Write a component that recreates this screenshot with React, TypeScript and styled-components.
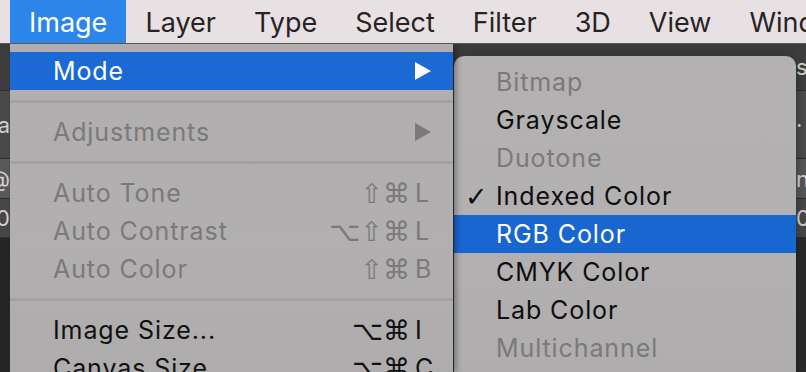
import React from "react";
import styled, { createGlobalStyle } from "styled-components";

const GlobalStyle = createGlobalStyle`
  html, body {
    margin: 0;
    padding: 0;
    background: #262626;
  }
  body {
    font-family: "Inter", "DejaVu Sans", sans-serif;
    -webkit-font-smoothing: antialiased;
  }
`;

const FONT = `"Inter", "DejaVu Sans", sans-serif`;
const SYMBOLS = `"DejaVu Sans", "Inter", sans-serif`;

const menuTitles = ["Image", "Layer", "Type", "Select", "Filter", "3D", "View", "Window"];

type Item =
  | { kind: "sep" }
  | {
      kind: "item";
      label: string;
      disabled?: boolean;
      active?: boolean;
      sub?: boolean;
      mods?: string;
      keyName?: string;
    };

const imageMenu: Item[] = [
  { kind: "item", label: "Mode", active: true, sub: true },
  { kind: "sep" },
  { kind: "item", label: "Adjustments", disabled: true, sub: true },
  { kind: "sep" },
  { kind: "item", label: "Auto Tone", disabled: true, mods: "⇧⌘", keyName: "L" },
  { kind: "item", label: "Auto Contrast", disabled: true, mods: "⌥⇧⌘", keyName: "L" },
  { kind: "item", label: "Auto Color", disabled: true, mods: "⇧⌘", keyName: "B" },
  { kind: "sep" },
  { kind: "item", label: "Image Size...", mods: "⌥⌘", keyName: "I" },
  { kind: "item", label: "Canvas Size...", mods: "⌥⌘", keyName: "C" },
];

const modeMenu = [
  { label: "Bitmap", disabled: true },
  { label: "Grayscale" },
  { label: "Duotone", disabled: true },
  { label: "Indexed Color", checked: true },
  { label: "RGB Color", active: true },
  { label: "CMYK Color" },
  { label: "Lab Color" },
  { label: "Multichannel", disabled: true },
];

// slivers of the Photoshop panels peeking out on both sides
const leftBands = [
  { h: 46, bg: "#3d3d3d", text: "" },
  { h: 67, bg: "#494949", text: "Clea" },
  { h: 39, bg: "#595959", text: "@" },
  { h: 38, bg: "#474747", text: "00" },
  { h: 200, bg: "#262626", text: "" },
];

const rightBands = [
  { h: 46, bg: "#3d3d3d", text: "s" },
  { h: 67, bg: "#4a4a4a", text: "·" },
  { h: 39, bg: "#555555", text: "ng" },
  { h: 38, bg: "#464646", text: "0c" },
  { h: 200, bg: "#2a2a2a", text: "" },
];

const Screen = styled.div`
  width: 806px;
  height: 372px;
  overflow: hidden;
  display: flex;
  flex-direction: column;
  background: #262626;
`;

const MenuBar = styled.div`
  height: 43px;
  flex: none;
  display: flex;
  align-items: stretch;
  padding-left: 10px;
  background: #e7e1e3;
  border-bottom: 1px solid #5a5858;
  overflow: hidden;
`;

const MenuTitle = styled.div<{ $active?: boolean }>`
  display: flex;
  align-items: center;
  padding: 1px 19px 0;
  font-family: ${FONT};
  font-size: 27px;
  white-space: nowrap;
  color: ${(p) => (p.$active ? "#ffffff" : "#272324")};
  background: ${(p) => (p.$active ? "#2c86ea" : "transparent")};
`;

const Workspace = styled.div`
  flex: 1;
  display: flex;
  min-height: 0;
  overflow: hidden;
`;

const Strip = styled.div<{ $align: "start" | "end" }>`
  display: flex;
  flex-direction: column;
  flex: none;
  width: ${(p) => (p.$align === "end" ? "10px" : "auto")};
  overflow: hidden;
`;

const Band = styled.div<{ $bg: string; $h: number; $align: "start" | "end" }>`
  height: ${(p) => p.$h}px;
  flex: none;
  display: flex;
  align-items: center;
  justify-content: ${(p) => (p.$align === "end" ? "flex-end" : "flex-start")};
  background: ${(p) => p.$bg};
  border-bottom: 1px solid #2e2e2e;
  font-family: ${FONT};
  font-size: 22px;
  color: #d2d2d2;
  white-space: nowrap;
  overflow: hidden;
`;

const Dropdown = styled.div`
  width: 443px;
  flex: none;
  position: relative;
  z-index: 2;
  display: flex;
  flex-direction: column;
  padding-top: 8px;
  background: linear-gradient(180deg, #b0aeae 0%, #b1afaf 60%, #aeacac 100%);
  box-shadow: 3px 0 6px rgba(0, 0, 0, 0.35);
`;

const Separator = styled.div`
  height: 23px;
  flex: none;
  display: flex;
  align-items: center;
  &::after {
    content: "";
    display: block;
    width: 100%;
    height: 3px;
    background: #a3a1a1;
  }
`;

const Row = styled.div<{ $active?: boolean; $disabled?: boolean }>`
  height: 38px;
  flex: none;
  display: flex;
  align-items: center;
  padding: 0 22px 0 43px;
  font-family: ${FONT};
  font-size: 25px;
  letter-spacing: 0.9px;
  background: ${(p) => (p.$active ? "#1a69d4" : "transparent")};
  color: ${(p) => (p.$active ? "#ffffff" : p.$disabled ? "#7b7979" : "#111111")};
`;

const Label = styled.span`
  flex: 1;
  white-space: nowrap;
`;

const Mods = styled.span`
  font-family: ${SYMBOLS};
  font-size: 27px;
  letter-spacing: 0;
  margin-right: 5px;
`;

const KeyName = styled.span`
  width: 16px;
  text-align: left;
  letter-spacing: 0;
`;

const Arrow = styled.svg`
  width: 18px;
  height: 18px;
  flex: none;
  margin-right: -1px;
`;

const SubArea = styled.div`
  flex: 1;
  display: flex;
  background: #3c3c3c;
  min-width: 0;
`;

const Submenu = styled.div`
  width: 342px;
  flex: none;
  margin: 12px 0 0 1px;
  padding-top: 7px;
  border-radius: 10px 10px 0 0;
  background: linear-gradient(180deg, #b3b1b1 0%, #b2b0b0 60%, #afadad 100%);
  box-shadow: 0 2px 8px rgba(0, 0, 0, 0.35);
  display: flex;
  flex-direction: column;
  position: relative;
  z-index: 1;
`;

const SubRow = styled.div<{ $active?: boolean; $disabled?: boolean }>`
  height: 38px;
  flex: none;
  display: flex;
  align-items: center;
  padding-left: 11px;
  font-family: ${FONT};
  font-size: 25px;
  letter-spacing: 0.9px;
  white-space: nowrap;
  background: ${(p) => (p.$active ? "#1866d0" : "transparent")};
  color: ${(p) => (p.$active ? "#ffffff" : p.$disabled ? "#7b7979" : "#0e0e0e")};
`;

const Check = styled.span`
  width: 31px;
  flex: none;
  font-family: ${SYMBOLS};
  font-size: 27px;
  font-weight: bold;
  letter-spacing: 0;
`;

const RightStrip = styled(Strip)`
  flex: 1;
`;

const TriangleArrow = ({ color }: { color: string }) => (
  <Arrow viewBox="0 0 18 18">
    <polygon points="1,0 17,9 1,18" fill={color} />
  </Arrow>
);

export default function App() {
  return (
    <>
      <GlobalStyle />
      <Screen>
        <MenuBar>
          {menuTitles.map((t) => (
            <MenuTitle key={t} $active={t === "Image"}>
              {t}
            </MenuTitle>
          ))}
        </MenuBar>
        <Workspace>
          <Strip $align="end">
            {leftBands.map((b, i) => (
              <Band key={i} $bg={b.bg} $h={b.h} $align="end">
                {b.text}
              </Band>
            ))}
          </Strip>
          <Dropdown>
            {imageMenu.map((item, i) =>
              item.kind === "sep" ? (
                <Separator key={i} />
              ) : (
                <Row key={i} $active={item.active} $disabled={item.disabled}>
                  <Label>{item.label}</Label>
                  {item.sub && (
                    <TriangleArrow color={item.active ? "#ffffff" : "#7b7979"} />
                  )}
                  {item.mods && <Mods>{item.mods}</Mods>}
                  {item.keyName && <KeyName>{item.keyName}</KeyName>}
                </Row>
              )
            )}
          </Dropdown>
          <SubArea>
            <Submenu>
              {modeMenu.map((m) => (
                <SubRow key={m.label} $active={m.active} $disabled={m.disabled}>
                  <Check>{m.checked ? "✓" : ""}</Check>
                  {m.label}
                </SubRow>
              ))}
            </Submenu>
            <RightStrip $align="start">
              {rightBands.map((b, i) => (
                <Band key={i} $bg={b.bg} $h={b.h} $align="start">
                  {b.text}
                </Band>
              ))}
            </RightStrip>
          </SubArea>
        </Workspace>
      </Screen>
    </>
  );
}
